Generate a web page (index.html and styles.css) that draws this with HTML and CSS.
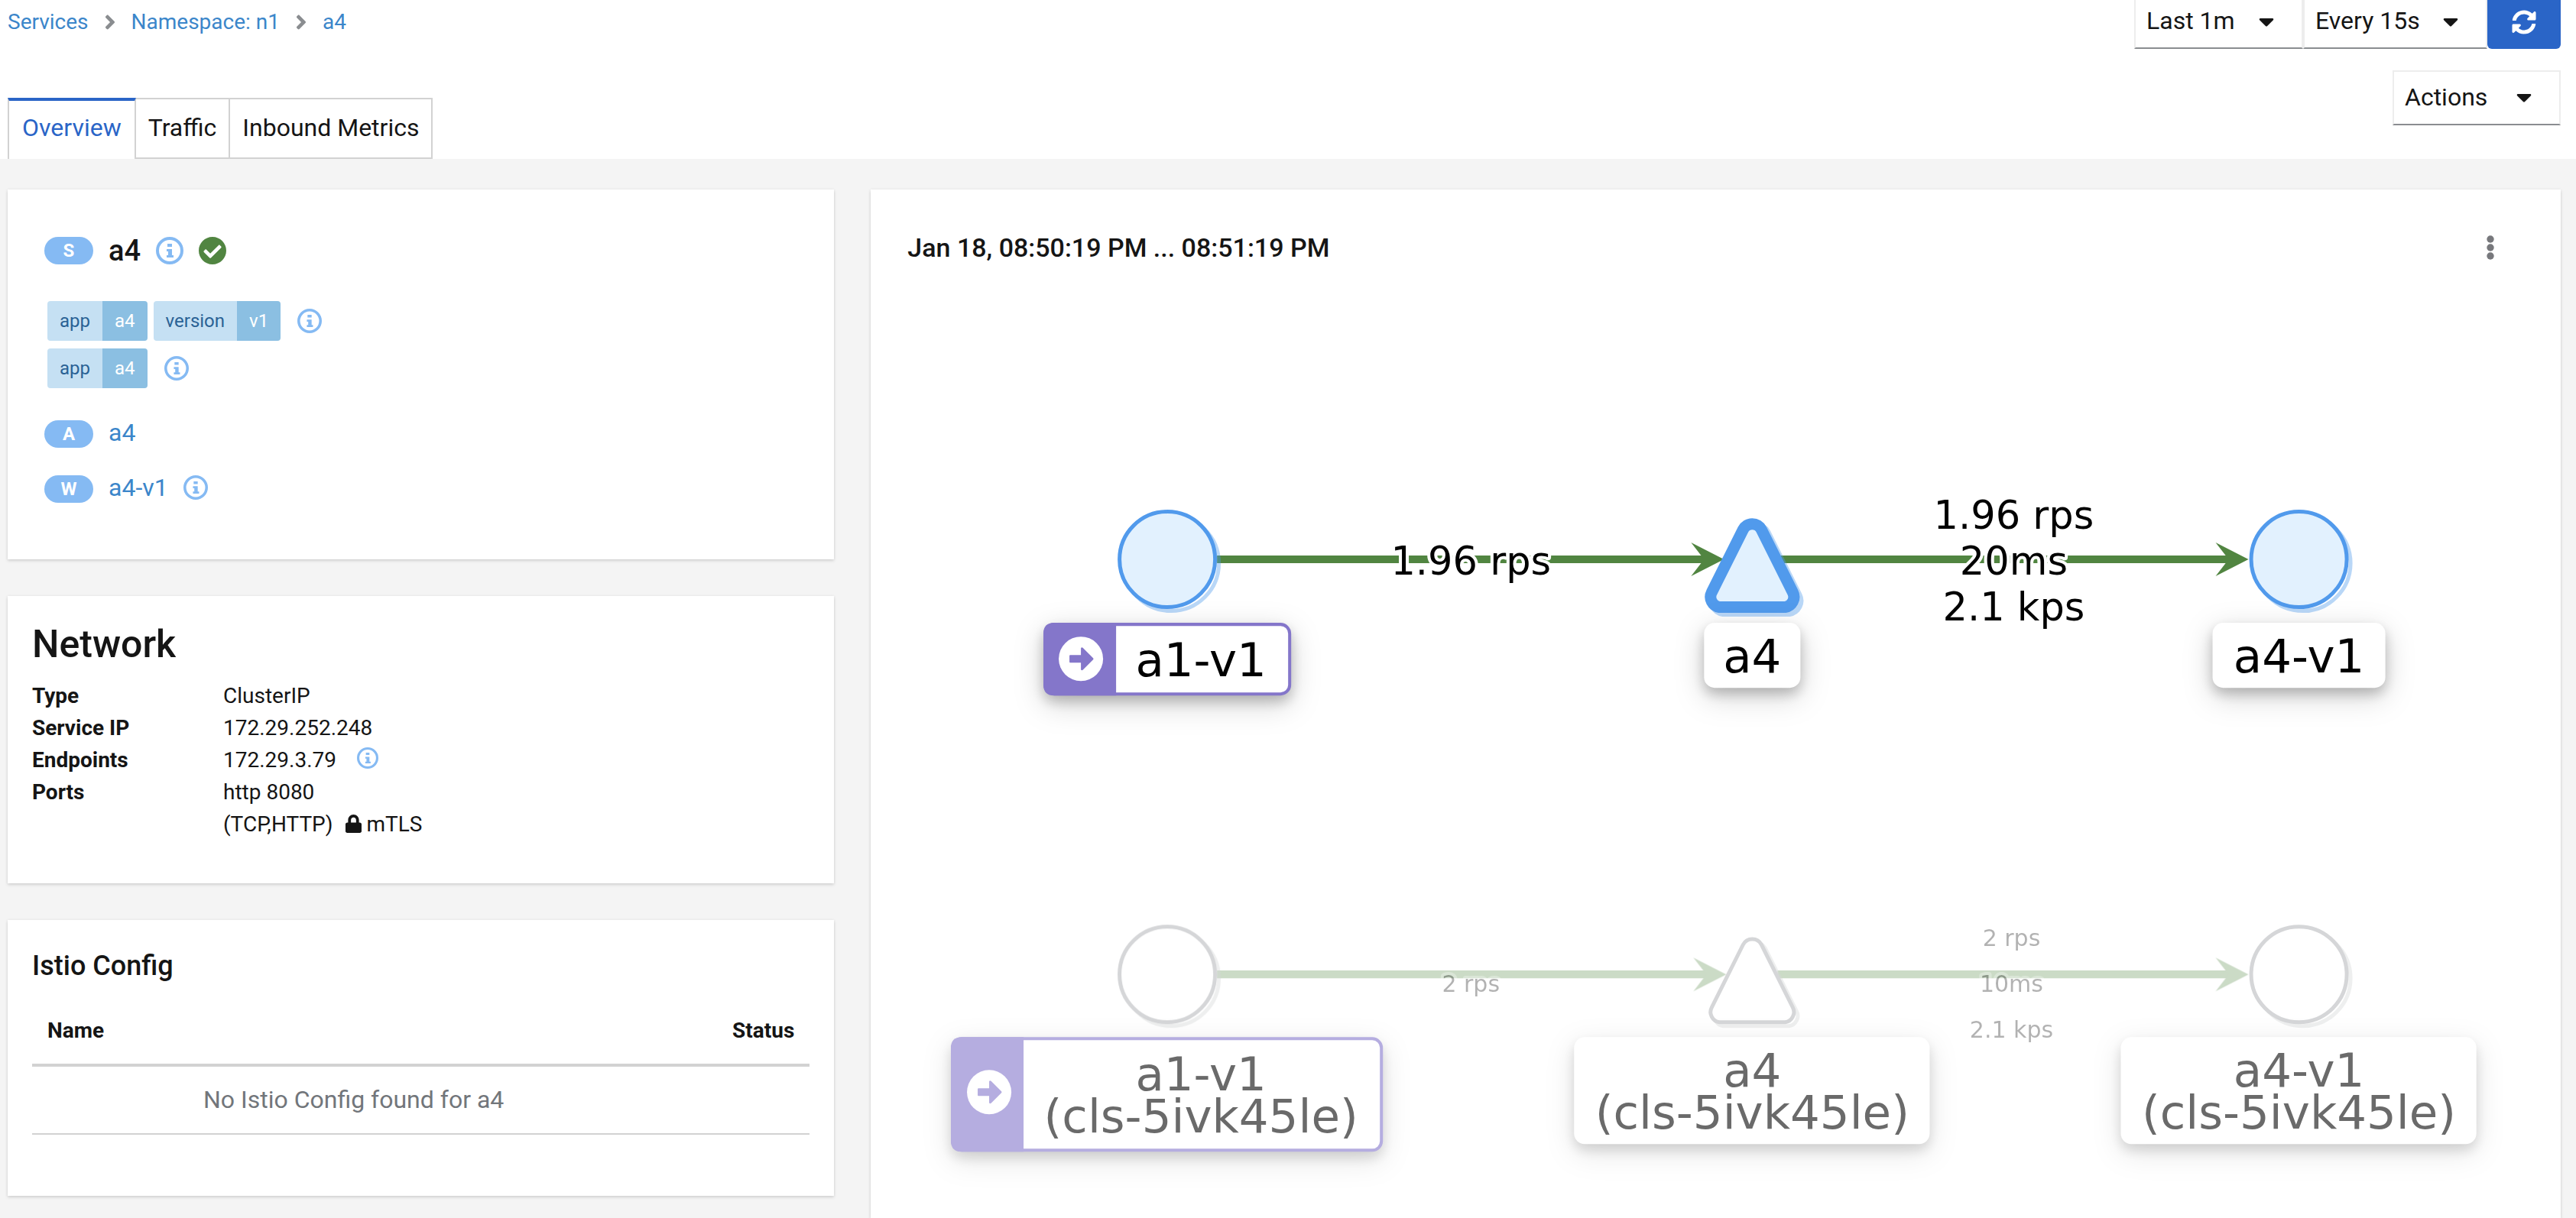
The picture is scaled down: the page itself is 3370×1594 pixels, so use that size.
FILE: index.html
```html
<!DOCTYPE html>
<html lang="en">
<head>
<meta charset="utf-8">
<title>a4 - Services</title>
<link rel="stylesheet" href="styles.css">
</head>
<body>
  <!-- shared icons -->
  <svg class="sprite" aria-hidden="true">
    <symbol id="icon-info" viewBox="0 0 36 36">
      <circle cx="18" cy="18" r="16" fill="none" stroke="currentColor" stroke-width="4"/>
      <path fill="currentColor" d="M15 9h6v4h-6zM14 16h7v8h2v3h-9v-3h2v-5h-2z"/>
    </symbol>
    <symbol id="icon-check" viewBox="8 8 496 496">
      <path fill="currentColor" d="M504 256c0 136.967-111.033 248-248 248S8 392.967 8 256 119.033 8 256 8s248 111.033 248 248zM227.314 387.314l184-184c6.248-6.248 6.248-16.379 0-22.627l-22.627-22.627c-6.248-6.249-16.379-6.249-22.628 0L216 308.118l-70.059-70.059c-6.248-6.248-16.379-6.248-22.628 0l-22.627 22.627c-6.248 6.248-6.248 16.379 0 22.627l104 104c6.249 6.249 16.379 6.249 22.628.001z"/>
    </symbol>
    <symbol id="icon-angle" viewBox="0 0 256 512">
      <path fill="currentColor" d="M224.3 273l-136 136c-9.4 9.4-24.6 9.4-33.9 0l-22.6-22.6c-9.4-9.4-9.4-24.6 0-33.9l96.4-96.4-96.4-96.4c-9.4-9.4-9.4-24.6 0-33.9L54.3 103c9.4-9.4 24.6-9.4 33.9 0l136 136c9.5 9.4 9.5 24.6.1 34z"/>
    </symbol>
    <symbol id="icon-caret" viewBox="0 0 320 512">
      <path fill="currentColor" d="M31.3 192h257.3c17.8 0 26.7 21.5 14.1 34.1L174.1 354.7c-7.8 7.8-20.5 7.8-28.3 0L17.2 226.1C4.6 213.5 13.5 192 31.3 192z"/>
    </symbol>
    <symbol id="icon-sync" viewBox="0 0 512 512">
      <path fill="currentColor" d="M370.72 133.28C339.458 104.008 298.888 87.962 255.848 88c-77.458.068-144.328 53.178-162.791 126.85-1.344 5.363-6.122 9.15-11.651 9.15H24.103c-7.498 0-13.194-6.807-11.807-14.176C33.933 94.924 134.813 8 256 8c66.448 0 126.791 26.136 171.315 68.685L463.03 40.97C478.149 25.851 504 36.559 504 57.941V192c0 13.255-10.745 24-24 24H345.941c-21.382 0-32.09-25.851-16.971-40.971l41.75-41.749zM32 296h134.059c21.382 0 32.09 25.851 16.971 40.971l-41.75 41.75c31.262 29.273 71.835 45.319 114.876 45.28 77.418-.07 144.315-53.144 162.787-126.849 1.344-5.363 6.122-9.15 11.651-9.15h57.304c7.498 0 13.194 6.807 11.807 14.176C478.067 417.076 377.187 504 256 504c-66.448 0-126.791-26.136-171.315-68.685L48.97 471.03C33.851 486.149 8 475.441 8 454.059V320c0-13.255 10.745-24 24-24z"/>
    </symbol>
    <symbol id="icon-lock" viewBox="0 0 448 512">
      <path fill="currentColor" d="M400 224h-24v-72C376 68.2 307.8 0 224 0S72 68.2 72 152v72H48c-26.5 0-48 21.5-48 48v192c0 26.5 21.5 48 48 48h352c26.5 0 48-21.5 48-48V272c0-26.5-21.5-48-48-48zm-104 0H152v-72c0-39.7 32.3-72 72-72s72 32.3 72 72v72z"/>
    </symbol>
  </svg>

  <header class="header">
    <div class="header-left">
      <nav class="breadcrumb" aria-label="Breadcrumb">
        <a href="#services">Services</a>
        <svg class="angle"><use href="#icon-angle"/></svg>
        <a href="#namespace">Namespace: n1</a>
        <svg class="angle"><use href="#icon-angle"/></svg>
        <a href="#a4">a4</a>
      </nav>
      <div class="tabs" role="tablist">
        <button class="tab active" role="tab" aria-selected="true">Overview</button>
        <button class="tab" role="tab">Traffic</button>
        <button class="tab" role="tab">Inbound Metrics</button>
      </div>
    </div>
    <div class="header-right">
      <div class="toolbar">
        <div class="select">
          <select class="duration" aria-label="Duration">
            <option>Last 1m</option>
            <option>Last 5m</option>
          </select>
          <svg class="caret"><use href="#icon-caret"/></svg>
        </div>
        <div class="select">
          <select class="interval" aria-label="Refresh interval">
            <option>Every 15s</option>
            <option>Every 30s</option>
          </select>
          <svg class="caret"><use href="#icon-caret"/></svg>
        </div>
        <button class="refresh" aria-label="Refresh"><svg><use href="#icon-sync"/></svg></button>
      </div>
      <button class="actions">Actions <svg class="caret"><use href="#icon-caret"/></svg></button>
    </div>
  </header>

  <main class="content">
    <div class="side">
      <section class="card service">
        <div class="row title-row">
          <span class="badge">S</span>
          <h1 class="name">a4</h1>
          <svg class="info info-lg"><use href="#icon-info"/></svg>
          <svg class="check"><use href="#icon-check"/></svg>
        </div>
        <div class="labels">
          <div class="label-row">
            <span class="label"><span class="key">app</span><span class="value">a4</span></span>
            <span class="label"><span class="key">version</span><span class="value">v1</span></span>
            <svg class="info"><use href="#icon-info"/></svg>
          </div>
          <div class="label-row">
            <span class="label"><span class="key">app</span><span class="value">a4</span></span>
            <svg class="info"><use href="#icon-info"/></svg>
          </div>
        </div>
        <div class="row">
          <span class="badge">A</span>
          <a class="link" href="#app">a4</a>
        </div>
        <div class="row">
          <span class="badge">W</span>
          <a class="link" href="#workload">a4-v1</a>
          <svg class="info"><use href="#icon-info"/></svg>
        </div>
      </section>

      <section class="card network">
        <h2>Network</h2>
        <dl class="details">
          <dt>Type</dt>
          <dd>ClusterIP</dd>
          <dt>Service IP</dt>
          <dd>172.29.252.248</dd>
          <dt>Endpoints</dt>
          <dd>172.29.3.79 <svg class="info info-sm"><use href="#icon-info"/></svg></dd>
          <dt>Ports</dt>
          <dd>http 8080</dd>
          <dd>(TCP,HTTP) <svg class="lock"><use href="#icon-lock"/></svg>mTLS</dd>
        </dl>
      </section>

      <section class="card istio">
        <h3>Istio Config</h3>
        <table class="config">
          <thead>
            <tr><th class="col-name">Name</th><th class="col-status">Status</th></tr>
          </thead>
          <tbody>
            <tr><td class="empty">No Istio Config found for a4</td><td></td></tr>
          </tbody>
        </table>
      </section>
    </div>

    <section class="card graph">
      <div class="graph-header">
        <h3>Jan 18, 08:50:19 PM ... 08:51:19 PM</h3>
        <button class="kebab" aria-label="Graph actions">
          <svg viewBox="0 0 12 32"><circle cx="6" cy="5" r="4.700"/><circle cx="6" cy="16" r="4.700"/><circle cx="6" cy="27" r="4.700"/></svg>
        </button>
      </div>
      <svg class="canvas" viewBox="0 0 2210 1194">
        <defs>
          <path id="vee" d="M0 0L-43-22L-26 0L-43 22z"/>
          <path id="triangle" d="M-53 43L-12-39A13.500 13.500 0 0 1 12-39L53 43A13.500 13.500 0 0 1 43 62.500H-43A13.500 13.500 0 0 1-53 43z"/>
          <circle id="circle" r="62.500"/>
          <g id="source-arrow">
            <circle r="29" fill="#fff"/>
            <path fill="currentColor" d="M-14-5H0V-14Q1-16 3-14L16-1Q17 0 16 1L3 14Q1 16 0 14V5H-14Q-15 5-15 4V-4Q-15-5-14-5z"/>
          </g>
        </defs>

        <!-- traffic on the selected cluster -->
        <g class="edges">
          <path class="edge" d="M453 332H1092"/>
          <use href="#vee" x="1116" y="332"/>
          <path class="edge" d="M1190 332H1778"/>
          <use href="#vee" x="1802" y="332"/>
        </g>
        <g class="nodes">
          <use class="shadow" href="#circle" x="393" y="337"/>
          <use class="shape" href="#circle" x="388" y="332"/>
          <use class="shadow selected" href="#triangle" x="1158" y="337"/>
          <use class="shape selected" href="#triangle" x="1153" y="332"/>
          <use class="shadow" href="#circle" x="1873" y="337"/>
          <use class="shape" href="#circle" x="1868" y="332"/>
        </g>
        <g class="edge-text">
          <text x="785" y="352">1.96 rps</text>
          <text x="1495" y="292">1.96 rps</text>
          <text x="1495" y="352">20ms</text>
          <text x="1495" y="412">2.1 kps</text>
        </g>
        <g class="node-label source">
          <rect class="box" x="228" y="417" width="320" height="91" rx="12"/>
          <path class="side-fill" d="M240 415H321V510H240Q226 510 226 496V429Q226 415 240 415z"/>
          <use href="#source-arrow" x="275" y="462"/>
          <text x="432" y="485">a1-v1</text>
        </g>
        <g class="node-label">
          <rect class="box" x="1090" y="415" width="126" height="85" rx="14"/>
          <text x="1153" y="480">a4</text>
        </g>
        <g class="node-label">
          <rect class="box" x="1755" y="415" width="226" height="85" rx="14"/>
          <text x="1868" y="480">a4-v1</text>
        </g>

        <!-- traffic on the remote cluster, dimmed -->
        <g class="dimmed">
          <g class="edges">
            <path class="edge" d="M453 875H1095"/>
            <use href="#vee" x="1119" y="875"/>
            <path class="edge" d="M1186 875H1778"/>
            <use href="#vee" x="1802" y="875"/>
          </g>
          <g class="nodes">
            <use class="shadow" href="#circle" x="393" y="880"/>
            <use class="shape" href="#circle" x="388" y="875"/>
            <use class="shadow" href="#triangle" x="1158" y="880"/>
            <use class="shape" href="#triangle" x="1153" y="875"/>
            <use class="shadow" href="#circle" x="1873" y="880"/>
            <use class="shape" href="#circle" x="1868" y="875"/>
          </g>
          <g class="edge-text">
            <text x="785" y="898">2 rps</text>
            <text x="1492" y="838">2 rps</text>
            <text x="1492" y="898">10ms</text>
            <text x="1492" y="958">2.1 kps</text>
          </g>
          <g class="node-label source">
            <rect class="box" x="107" y="959" width="561" height="146" rx="12"/>
            <path class="side-fill" d="M119 957H200V1107H119Q105 1107 105 1093V971Q105 957 119 957z"/>
            <use href="#source-arrow" x="155" y="1029"/>
            <text x="432" y="1027">a1-v1</text>
            <text x="432" y="1082">(cls-5ivk45le)</text>
          </g>
          <g class="node-label">
            <rect class="box" x="920" y="957" width="465" height="140" rx="14"/>
            <text x="1153" y="1022">a4</text>
            <text x="1153" y="1077">(cls-5ivk45le)</text>
          </g>
          <g class="node-label">
            <rect class="box" x="1635" y="957" width="465" height="140" rx="14"/>
            <text x="1868" y="1022">a4-v1</text>
            <text x="1868" y="1077">(cls-5ivk45le)</text>
          </g>
        </g>
      </svg>
    </section>
  </main>
</body>
</html>
```
FILE: styles.css
```css
* {
  box-sizing: border-box;
}

body {
  margin: 0;
  height: 100vh;
  overflow: hidden;
  background: #f4f4f4;
  color: #151515;
  font-family: Roboto, sans-serif;
  font-size: 28px;
  line-height: 42px;
}

h1, h2, h3, dl, dd {
  margin: 0;
}

h1, h2, h3 {
  font-weight: 500;
}

a {
  color: #3b86ca;
  text-decoration: none;
}

button, select {
  font-family: inherit;
  font-size: 32px;
  color: inherit;
  cursor: pointer;
}

.sprite {
  display: none;
}

/* Header */
.header {
  display: flex;
  justify-content: space-between;
  background: #fff;
  padding: 0 20px 0 10px;
  height: 208px;
}

.header-left {
  display: flex;
  flex-direction: column;
  justify-content: space-between;
}

.breadcrumb {
  display: flex;
  align-items: center;
  gap: 20px;
  padding-top: 8px;
}

.angle {
  width: 16px;
  height: 30px;
  color: #8a8d90;
}

.tabs {
  display: flex;
}

.tab {
  height: 80px;
  padding: 0 16px 2px;
  background: #fff;
  border: 2px solid #d2d2d2;
  border-left: none;
}

.tab.active {
  padding: 0 17px 6px;
  color: #2a65c7;
  border-top: 4px solid #2a65c7;
  border-left: 2px solid #d2d2d2;
  border-bottom: none;
}

.header-right {
  display: flex;
  flex-direction: column;
  align-items: flex-end;
  gap: 28px;
}

.toolbar {
  display: flex;
}

.select {
  position: relative;
}

.select select {
  appearance: none;
  height: 64px;
  padding: 0 14px 8px;
  background: #fff;
  border: 2px solid #ededed;
  border-top: none;
  border-bottom-color: #8a8d90;
  border-radius: 0;
}

.duration {
  width: 221px;
}

.interval {
  width: 241px;
}

.caret {
  width: 20px;
  height: 32px;
}

.select .caret {
  position: absolute;
  right: 38px;
  top: 12px;
  pointer-events: none;
}

.refresh {
  width: 96px;
  height: 64px;
  padding: 0 0 12px;
  background: #2a65c7;
  border: none;
  border-radius: 0 0 6px 6px;
  color: #fff;
}

.refresh svg {
  width: 32px;
  height: 32px;
  vertical-align: middle;
}

.actions {
  display: flex;
  align-items: center;
  justify-content: space-between;
  width: 220px;
  height: 72px;
  padding: 0 36px 2px 14px;
  background: #fff;
  border: 2px solid #ededed;
  border-bottom-color: #8a8d90;
}

/* Cards */
.content {
  display: grid;
  grid-template-columns: repeat(12, minmax(0, 1fr));
  gap: 48px;
  align-items: start;
  padding: 40px 20px 0 10px;
}

.side {
  grid-column: span 4;
  display: flex;
  flex-direction: column;
  gap: 48px;
}

.card {
  background: #fff;
  box-shadow: 0 2px 4px rgba(3, 3, 3, 0.13), 0 0 4px rgba(3, 3, 3, 0.06);
}

.service {
  padding: 56px 48px 68px;
}

.row {
  display: flex;
  align-items: center;
  height: 48px;
  margin-bottom: 24px;
}

.row:last-child {
  margin-bottom: 0;
}

.badge {
  width: 64px;
  height: 36px;
  margin-right: 20px;
  border-radius: 18px;
  background: #85baf3;
  color: #fff;
  font-size: 24px;
  font-weight: 700;
  line-height: 36px;
  text-align: center;
}

.name {
  font-size: 38px;
}

.link {
  padding-bottom: 4px;
  font-size: 32px;
}

.info {
  width: 32px;
  height: 32px;
  color: #85baf3;
}

.info-lg {
  width: 36px;
  height: 36px;
}

.info-sm {
  width: 28px;
  height: 28px;
  margin-left: 20px;
  vertical-align: -2px;
}

.row .info {
  margin-left: 20px;
}

.link + .info {
  margin-bottom: 4px;
}

.check {
  width: 36px;
  height: 36px;
  margin-left: 20px;
  color: #518541;
}

.labels {
  display: flex;
  flex-direction: column;
  gap: 10px;
  margin: 42px 0 36px 4px;
}

.label-row {
  display: flex;
  align-items: center;
  gap: 8px;
}

.label {
  display: flex;
  border-radius: 4px;
  overflow: hidden;
  font-size: 24px;
  line-height: 52px;
}

.key {
  padding: 0 16px;
  background: #c5e0f3;
  color: #2a6295;
}

.value {
  padding: 0 16px;
  background: #8bbfe2;
  color: #fff;
}

.label-row .info {
  margin-left: 14px;
}

.network {
  padding: 32px 32px 56px;
}

.network h2 {
  font-size: 50px;
  line-height: 62px;
  margin-bottom: 16px;
}

.details {
  display: grid;
  grid-template-columns: 250px 1fr;
}

.details dt {
  font-weight: 700;
}

.details dd {
  grid-column: 2;
}

.lock {
  width: 21px;
  height: 24px;
  margin: 0 6px 0 10px;
  vertical-align: -2px;
}

.istio {
  padding: 38px 32px 80px;
}

.istio h3 {
  font-size: 36px;
  line-height: 44px;
}

.config {
  width: 100%;
  margin-top: 24px;
  border-collapse: collapse;
}

.config th {
  height: 84px;
  padding: 0 20px 4px;
  border-bottom: 4px solid #d2d2d2;
  font-weight: 700;
  text-align: left;
}

.config td {
  height: 90px;
  padding: 0 0 2px;
  border-bottom: 2px solid #d2d2d2;
}

.config .col-status {
  width: 176px;
  text-align: right;
}

.config .empty {
  color: #72767b;
  font-size: 32px;
  text-align: center;
}

/* Graph */
.graph {
  grid-column: span 8;
}

.graph-header {
  display: flex;
  align-items: center;
  justify-content: space-between;
  height: 152px;
  padding: 0 80px 0 48px;
}

.graph-header h3 {
  font-size: 34px;
}

.kebab {
  display: flex;
  align-items: center;
  justify-content: center;
  padding: 0;
  width: 24px;
  height: 42px;
  background: none;
  border: none;
}

.kebab svg {
  width: 12px;
  height: 32px;
  fill: #77787c;
}

.canvas {
  display: block;
  width: 100%;
}

.edge {
  stroke: #518541;
  stroke-width: 10;
}

.edges {
  fill: #518541;
}

.shape {
  fill: #e2f1fe;
  stroke: #519aec;
  stroke-width: 5;
}

.shadow {
  fill: none;
  stroke: #519aec;
  stroke-width: 5;
  opacity: 0.4;
}

.selected {
  stroke-width: 15;
}

.edge-text, .node-label {
  font-family: "DejaVu Sans", sans-serif;
  text-anchor: middle;
}

.edge-text {
  font-size: 51px;
  paint-order: stroke;
  stroke: #fff;
  stroke-width: 8;
  stroke-linejoin: round;
}

.node-label {
  font-size: 61px;
}

.box {
  fill: #fff;
  filter: drop-shadow(0 8px 8px rgba(0, 0, 0, 0.2)) drop-shadow(0 10px 18px rgba(0, 0, 0, 0.18));
}

.source {
  color: #8476ca;
}

.source .box {
  stroke: #8476ca;
  stroke-width: 4;
}

.side-fill {
  fill: #8476ca;
}

.dimmed .edges {
  opacity: 0.3;
}

.dimmed .shape {
  fill: #fff;
  stroke: #d5d6d8;
}

.dimmed .shadow {
  stroke: #d5d6d8;
}

.dimmed .edge-text {
  font-size: 30px;
  opacity: 0.3;
}

.dimmed .box {
  filter: drop-shadow(0 8px 8px rgba(0, 0, 0, 0.12)) drop-shadow(0 10px 18px rgba(0, 0, 0, 0.11));
}

.dimmed .node-label {
  fill: #6a6a6a;
}

.dimmed .source {
  color: #b5ade0;
}

.dimmed .source .box {
  stroke: #b5ade0;
}

.dimmed .side-fill {
  fill: #b5ade0;
}
```
